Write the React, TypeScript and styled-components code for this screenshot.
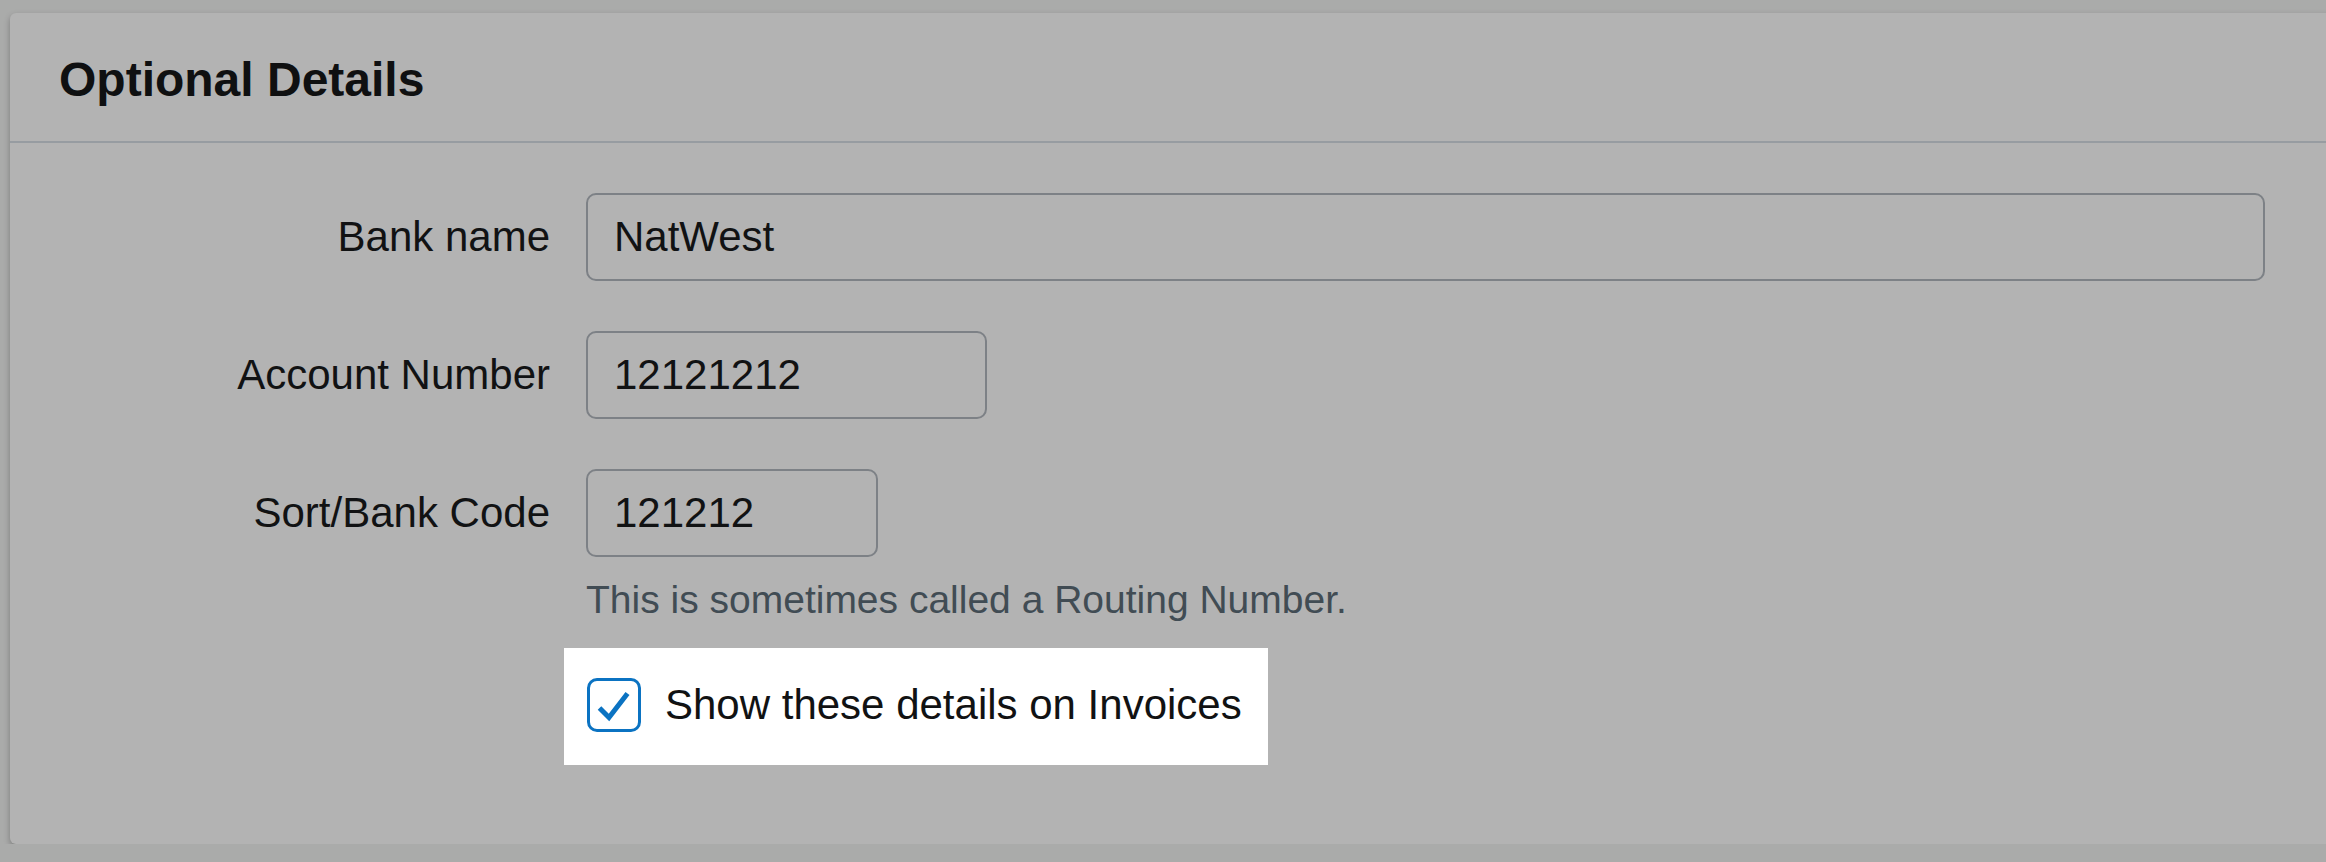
import React from "react";
import styled, { createGlobalStyle } from "styled-components";

const GlobalStyle = createGlobalStyle`
  html, body {
    margin: 0;
    padding: 0;
    background: #aaabaa;
    overflow: hidden;
  }
  body {
    font-family: "Liberation Sans", Arial, sans-serif;
    color: #111213;
  }
`;

interface FieldProps {
  label: string;
  value: string;
  width: number;
  children?: React.ReactNode;
}

function Field(props: FieldProps) {
  const { label, value, width, children } = props;
  return (
    <Row>
      <Label>{label}</Label>
      <FieldCell>
        <Input width={width}>{value}</Input>
        {children}
      </FieldCell>
    </Row>
  );
}

function App() {
  return (
    <>
      <GlobalStyle />
      <Card>
        <Header>
          <Title>Optional Details</Title>
        </Header>
        <Form>
          <Field label="Bank name" value="NatWest" width={1679} />
          <Field label="Account Number" value="12121212" width={401} />
          <Field label="Sort/Bank Code" value="121212" width={292}>
            <Help>This is sometimes called a Routing Number.</Help>
            <Highlight>
              <CheckBox>
                <svg width="48" height="48" viewBox="0 0 48 48">
                  <polyline
                    points="9.5,27 19,36.5 37.5,12.5"
                    fill="none"
                    stroke="#0b73c2"
                    strokeWidth="5"
                    strokeLinejoin="miter"
                  />
                </svg>
              </CheckBox>
              <CheckLabel>Show these details on Invoices</CheckLabel>
            </Highlight>
          </Field>
        </Form>
      </Card>
    </>
  );
}

export default App;

const Card = styled.div`
  margin: 13px -30px 0 10px;
  background: #b3b3b3;
  border-radius: 6px;
  box-shadow: 0 3px 6px rgba(0, 0, 0, 0.28);
  height: 831px;
  box-sizing: border-box;
`;

const Header = styled.div`
  height: 130px;
  display: flex;
  align-items: center;
  padding-left: 49px;
  border-bottom: 2px solid #979ca1;
  box-sizing: border-box;
`;

const Title = styled.h2`
  margin: 0;
  font-size: 48px;
  font-weight: 700;
  color: #0f1011;
  padding-top: 4px;
`;

const Form = styled.div`
  padding: 50px 0 0 0;
  display: flex;
  flex-direction: column;
  row-gap: 50px;
`;

const Row = styled.div`
  display: grid;
  grid-template-columns: 540px 1fr;
  column-gap: 36px;
  align-items: start;
`;

const Label = styled.div`
  height: 88px;
  line-height: 88px;
  text-align: right;
  font-size: 42px;
  color: #111213;
`;

const FieldCell = styled.div`
  display: flex;
  flex-direction: column;
  align-items: flex-start;
`;

const Input = styled.div<{ width: number }>`
  width: ${(p) => p.width}px;
  height: 88px;
  box-sizing: border-box;
  border: 2px solid #7d8186;
  border-radius: 10px;
  padding: 0 26px;
  display: flex;
  align-items: center;
  font-size: 42px;
  color: #111213;
`;

const Help = styled.p`
  margin: 20px 0 0;
  font-size: 39px;
  line-height: 46px;
  color: #414c54;
`;

const Highlight = styled.div`
  margin: 25px 0 0 -22px;
  background: #ffffff;
  display: flex;
  align-items: center;
  column-gap: 24px;
  padding: 30px 26px 33px 23px;
`;

const CheckBox = styled.div`
  width: 54px;
  height: 54px;
  box-sizing: border-box;
  border: 3px solid #0b73c2;
  border-radius: 10px;
  background: #ffffff;
  display: flex;
  align-items: center;
  justify-content: center;
`;

const CheckLabel = styled.span`
  font-size: 42px;
  color: #111213;
`;
